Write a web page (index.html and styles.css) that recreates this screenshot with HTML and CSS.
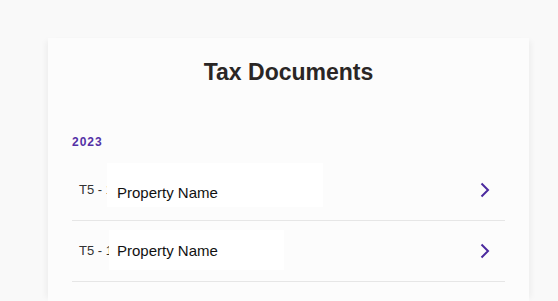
FILE: index.html
```html
<!DOCTYPE html>
<html lang="en">
<head>
<meta charset="utf-8">
<title>Tax Documents</title>
<link rel="stylesheet" href="styles.css">
</head>
<body>
<main class="card">
  <h1 class="title">Tax Documents</h1>
  <section class="year-group">
    <h2 class="year">2023</h2>
    <ul class="doc-list">
      <li class="doc-row">
        <span class="doc-label">T5 - 1</span>
        <span class="mask mask-one">Property Name</span>
        <svg class="chevron" width="10" height="16" viewBox="0 0 10 16" aria-hidden="true"><path d="M1.5 1.5 L8 8 L1.5 14.5" fill="none" stroke="currentColor" stroke-width="2"/></svg>
      </li>
      <li class="doc-row">
        <span class="doc-label">T5 - 1</span>
        <span class="mask mask-two">Property Name</span>
        <svg class="chevron" width="10" height="16" viewBox="0 0 10 16" aria-hidden="true"><path d="M1.5 1.5 L8 8 L1.5 14.5" fill="none" stroke="currentColor" stroke-width="2"/></svg>
      </li>
    </ul>
  </section>
</main>
</body>
</html>
```

FILE: styles.css
```css
html, body {
  margin: 0;
  padding: 0;
}
body {
  background: #f9f9f9;
  width: 558px;
  height: 301px;
  overflow: hidden;
  font-family: "Liberation Sans", Arial, sans-serif;
}
.card {
  box-sizing: border-box;
  margin: 38px 0 0 48px;
  width: 481px;
  height: 263px;
  background: #fcfcfc;
  box-shadow: 5px 0 6px -3px rgba(0, 0, 0, 0.05), -5px 0 6px -3px rgba(0, 0, 0, 0.05);
  padding: 20px 24px 0;
}
.title {
  margin: 0;
  text-align: center;
  font-size: 23px;
  line-height: 28px;
  font-weight: 700;
  color: #2a2625;
}
.year-group {
  margin-top: 48px;
}
.year {
  margin: 0 0 10px;
  font-size: 12px;
  line-height: 16px;
  font-weight: 700;
  letter-spacing: 1px;
  color: #5431a6;
}
.doc-list {
  list-style: none;
  margin: 0;
  padding: 0;
}
.doc-row {
  position: relative;
  display: flex;
  align-items: center;
  justify-content: space-between;
  height: 60px;
  border-bottom: 1px solid #e6e6e6;
  padding: 0 15px 0 7px;
}
.doc-label {
  font-size: 13px;
  line-height: 16px;
  color: #333333;
  white-space: nowrap;
}
.mask {
  position: absolute;
  box-sizing: border-box;
  background: #ffffff;
  font-size: 15px;
  line-height: 18px;
  color: #111111;
  white-space: nowrap;
}
.mask-one {
  left: 35px;
  top: 3px;
  width: 216px;
  height: 44px;
  padding: 21px 0 0 10px;
}
.mask-two {
  left: 37px;
  top: 9px;
  width: 175px;
  height: 40px;
  padding: 12px 0 0 8px;
}
.chevron {
  display: block;
  color: #4b2a9e;
  flex: none;
}
```
